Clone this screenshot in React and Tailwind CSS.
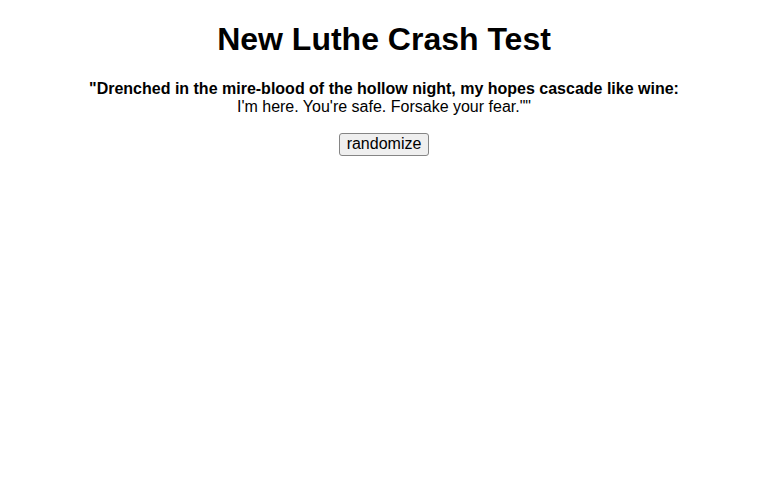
import React, { useState } from 'react';

const lines = [
  ['"Drenched in the mire-blood of the hollow night, my hopes cascade like wine:', 'I\'m here. You\'re safe. Forsake your fear.""'],
];

export default function App() {
  const [idx, setIdx] = useState(0);
  const [head, tail] = lines[idx];

  return (
    <div className="min-h-screen bg-white text-black text-center font-['Liberation_Sans',Arial,sans-serif] px-2 py-px">
      <h1 className="text-[32px] font-bold leading-[36.8px] mt-[20.44px] mb-[21.44px]">New Luthe Crash Test</h1>
      <p className="text-base leading-[18.4px] mb-4">
        <b>{head}</b>
        <br />
        {tail}
      </p>
      <button
        onClick={() => setIdx((idx + 1) % lines.length)}
        className="text-base leading-[18.4px] px-[7px] py-[1.5px] bg-[#efefef] border border-solid border-[#858585] rounded-[3px] hover:bg-[#e5e5e5]"
      >
        randomize
      </button>
    </div>
  );
}
